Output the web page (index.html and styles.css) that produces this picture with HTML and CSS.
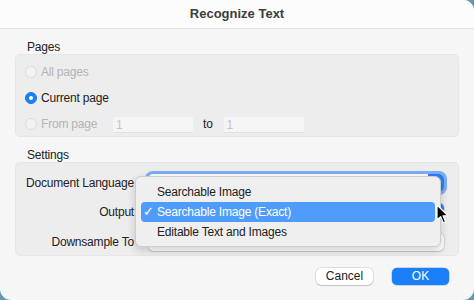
FILE: index.html
```html
<!DOCTYPE html>
<html>
<head>
<meta charset="utf-8">
<link rel="stylesheet" href="styles.css">
</head>
<body>
<div class="desk">
  <div class="window">
    <div class="titlebar">Recognize Text</div>
    <div class="content">
      <div class="section-label">Pages</div>
      <div class="group pages">
        <div class="radio-row disabled"><span class="radio"></span><span class="rlabel">All pages</span></div>
        <div class="radio-row"><span class="radio on"></span><span class="rlabel">Current page</span></div>
        <div class="radio-row disabled">
          <span class="radio"></span><span class="rlabel fixed">From page</span>
          <span class="field">1</span>
          <span class="to">to</span>
          <span class="field">1</span>
        </div>
      </div>
      <div class="section-label">Settings</div>
      <div class="group settings">
        <div class="set-row"><span class="slabel">Document Language</span><span class="popup focus"><span class="ptext"></span><span class="parrow"></span></span></div>
        <div class="set-row"><span class="slabel">Output</span><span class="popup"><span class="ptext"></span><span class="parrow"></span></span></div>
        <div class="set-row"><span class="slabel">Downsample To</span><span class="popup plain"><span class="ptext"></span><span class="parrow"></span></span></div>
      </div>
      <div class="buttons">
        <span class="btn">Cancel</span>
        <span class="btn primary">OK</span>
      </div>
    </div>
    <div class="menu">
      <div class="mitem">Searchable Image</div>
      <div class="mitem sel"><span class="check">✓</span>Searchable Image (Exact)</div>
      <div class="mitem">Editable Text and Images</div>
    </div>
    <svg class="cursor" width="14" height="22" viewBox="0 0 14 22">
      <path d="M1 1 L1 16 L4.6 12.6 L7.2 18.8 L9.6 17.8 L7 11.8 L12 11.8 Z" fill="#000" stroke="#fff" stroke-width="1.2" stroke-linejoin="round"/>
    </svg>
  </div>
</div>
</body>
</html>
```

FILE: styles.css
```css
* { box-sizing: border-box; }
html, body { margin: 0; padding: 0; }
body {
  width: 474px;
  height: 300px;
  overflow: hidden;
  font-family: "Liberation Sans", Arial, sans-serif;
  font-size: 12px;
  letter-spacing: -0.2px;
  color: #222;
}
.desk {
  width: 474px;
  height: 300px;
  background: #6398b1;
}
.window {
  position: relative;
  width: 474px;
  height: 300px;
  background: #f6f6f6;
  border-radius: 0 11px 11px 11px;
  overflow: hidden;
}
.titlebar {
  height: 29px;
  background: #fcfcfc;
  border-bottom: 1px solid #dedede;
  text-align: center;
  font-weight: bold;
  font-size: 13px;
  letter-spacing: 0;
  line-height: 28px;
  color: #3d3d3d;
}
.content {
  padding: 0 15px;
}
.section-label {
  padding: 11px 0 0 12px;
  line-height: 14px;
  height: 25px;
}
.group {
  background: #ededed;
  border: 1px solid #e6e6e6;
  border-radius: 5px;
}
.pages {
  height: 83px;
  padding: 4px 0 0 9px;
}
.radio-row {
  height: 26px;
  display: flex;
  align-items: center;
}
.radio {
  width: 12px;
  height: 12px;
  border-radius: 50%;
  background: #f3f3f3;
  border: 1px solid #dcdcdc;
  flex: none;
}
.radio.on {
  background: #1b80f8;
  border-color: #1576ee;
  position: relative;
}
.radio.on::after {
  content: "";
  position: absolute;
  left: 3px;
  top: 3px;
  width: 4px;
  height: 4px;
  border-radius: 50%;
  background: #fff;
}
.rlabel {
  margin-left: 4px;
}
.rlabel.fixed {
  width: 72px;
}
.disabled .rlabel { color: #b4b4b4; }
.field {
  width: 80px;
  height: 16px;
  background: #f5f5f5;
  border-bottom: 1px solid #e2e2e2;
  color: #c4c4c4;
  line-height: 16px;
  padding-left: 3px;
  margin-top: 2px;
}
.to {
  margin: 0 11px 0 10px;
}
.settings {
  height: 94px;
  padding-top: 5px;
}
.set-row {
  height: 29.5px;
  display: flex;
  align-items: center;
}
.slabel {
  width: 118px;
  text-align: right;
}
.popup {
  margin-left: 14px;
  width: 296px;
  height: 18px;
  background: #fdfdfd;
  border-radius: 5px;
  box-shadow: 0 0 0 0.5px rgba(0,0,0,0.18), 0 1px 1px rgba(0,0,0,0.1);
  display: flex;
}
.popup.focus {
  box-shadow: 0 0 0 3px rgba(86,150,245,0.75);
}
.ptext {
  flex: 1;
}
.parrow {
  width: 16px;
  background: #2a7ff6;
  border-radius: 0 5px 5px 0;
}
.popup.plain .parrow { background: transparent; }
.buttons {
  display: flex;
  justify-content: flex-end;
  gap: 19px;
  padding: 12px 10px 0 0;
}
.btn {
  width: 57px;
  height: 17px;
  line-height: 17px;
  text-align: center;
  border-radius: 5px;
  background: #fff;
  box-shadow: 0 0 0 0.5px rgba(0,0,0,0.2), 0 1px 1px rgba(0,0,0,0.12);
  letter-spacing: 0;
}
.btn.primary {
  background: #1b7ffa;
  color: #fff;
  box-shadow: 0 0 0 0.5px rgba(0,90,220,0.4);
}
.menu {
  position: absolute;
  left: 135px;
  top: 176px;
  width: 306px;
  height: 71px;
  background: #efefef;
  border: 1px solid #cdcdcd;
  border-radius: 6px;
  box-shadow: 0 3px 8px rgba(0,0,0,0.18);
  padding: 5px 5px 0 5px;
}
.mitem {
  height: 20px;
  line-height: 20px;
  padding-left: 16px;
  border-radius: 4px;
  position: relative;
}
.mitem.sel {
  background: #4f9cfa;
  color: #fff;
}
.check {
  position: absolute;
  left: 2px;
  top: 0;
  font-family: "DejaVu Sans", sans-serif;
  font-size: 13px;
}
.cursor {
  position: absolute;
  left: 436px;
  top: 204px;
}
```
